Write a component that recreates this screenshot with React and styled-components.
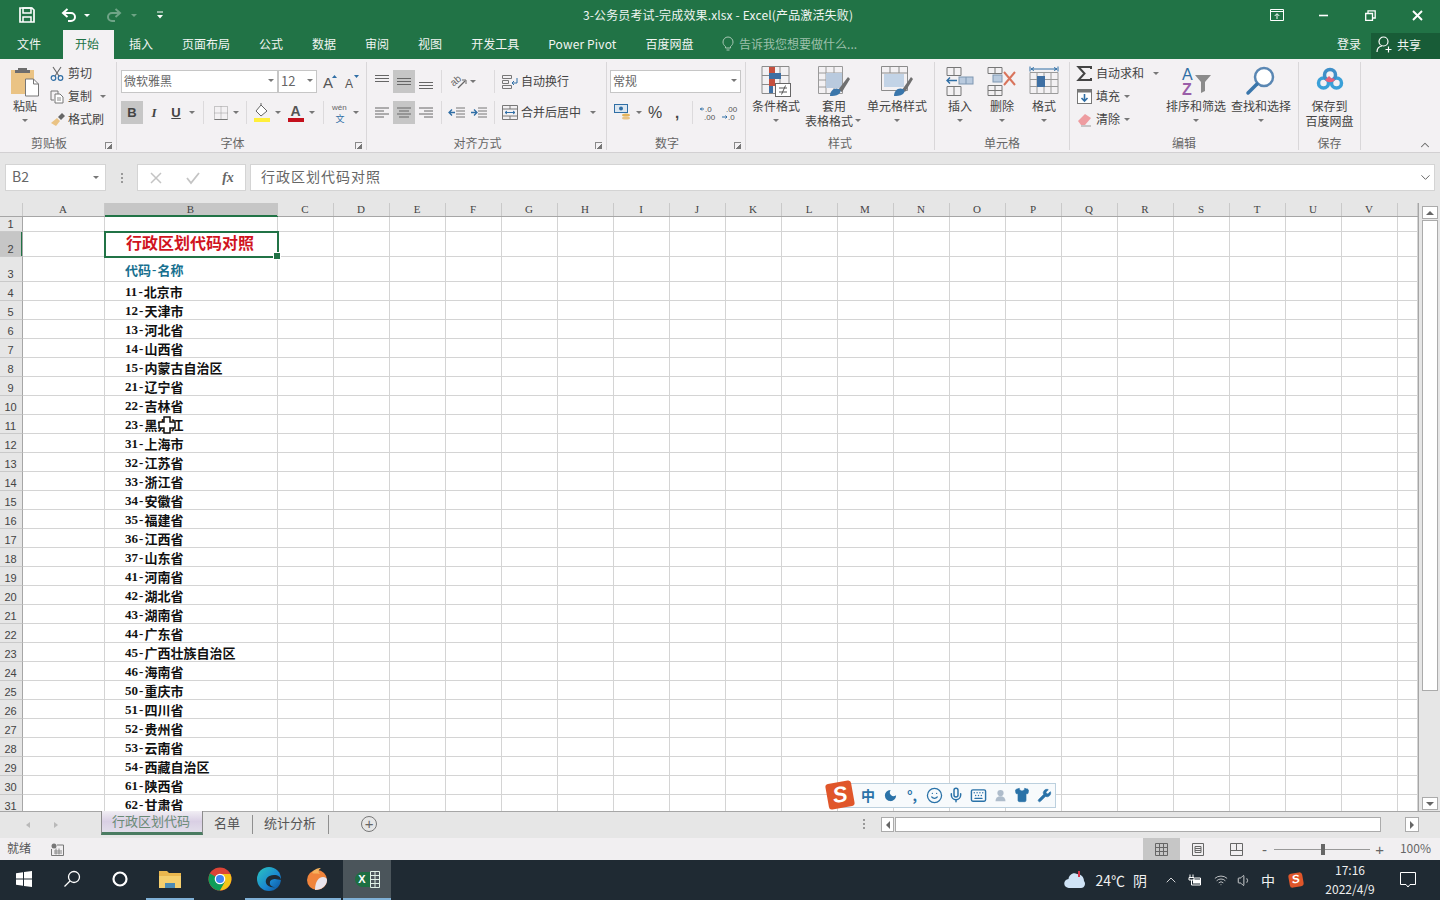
import React from "react";
import styled, { createGlobalStyle } from "styled-components";
import { Moon, Smile, Mic, Keyboard, Shirt, Wrench, UserRound, ChevronUp, ChevronDown, Volume1, Wifi } from "lucide-react";

const GlobalStyle = createGlobalStyle`
  html, body { margin: 0; padding: 0; background: #f1f0f1; }
  * { box-sizing: border-box; }
  body { font-family: "Noto Sans CJK SC", "Liberation Sans", sans-serif; font-size: 12px; color: #444; }
`;

const Page = styled.div`
  position: relative;
  width: 1440px;
  height: 900px;
  overflow: hidden;
  display: flex;
  flex-direction: column;
`;

/* ---- title bar ---- */
const TitleBar = styled.div`
  height: 30px;
  background: #217346;
  color: #fff;
  display: grid;
  grid-template-columns: 1fr auto 1fr;
  align-items: center;
`;
const Qat = styled.div`
  display: flex;
  align-items: center;
  padding-left: 19px;
`;
const QatBtn = styled.span`
  display: flex;
  align-items: center;
  justify-content: center;
  margin-left: ${p => p.$ml || 0}px;
  opacity: ${p => (p.$dim ? 0.35 : 1)};
`;
const QatCaret = styled.span`
  margin-left: ${p => p.$ml || 5}px;
  opacity: ${p => (p.$dim ? 0.35 : 1)};
  border-left: 3px solid transparent;
  border-right: 3px solid transparent;
  border-top: 3px solid #fff;
`;
const DocTitle = styled.div`
  font-size: 12px;
  letter-spacing: 0.15px;
  color: #f0f5f2;
  padding: 0 4px 2px 0;
`;
const WinBtns = styled.div`
  display: flex;
  justify-content: flex-end;
  align-items: center;
  margin-right: -1px;
`;
const WinBtn = styled.span`
  width: 47px;
  display: flex;
  justify-content: center;
  align-items: center;
`;

/* ---- ribbon tabs ---- */
const TabBar = styled.div`
  height: 29px;
  background: #217346;
  display: flex;
  align-items: stretch;
  gap: 2px;
  padding-left: 3.5px;
`;
const Tab = styled.div`
  padding: ${p => (p.$active ? "0 14.5px 2px 12px" : "0 13.5px 2px")};
  margin-left: ${p => (p.$active ? "6.5px" : "0")};
  background: ${p => (p.$active ? "#f3f1f3" : "transparent")};
  color: ${p => (p.$active ? "#217346" : "#f1f5f2")};
  display: flex;
  align-items: center;
  line-height: 1;
  white-space: nowrap;
  letter-spacing: ${p => (p.$latin ? "0.15px" : "0")};
`;
const TellMe = styled.div`
  display: flex;
  align-items: center;
  gap: 5px;
  margin-left: 13px;
  padding-bottom: 2px;
  color: #9dc0ab;
`;
const TabRight = styled.div`
  margin-left: auto;
  display: flex;
  align-items: stretch;
`;
const Login = styled.div`
  display: flex;
  align-items: center;
  color: #f1f5f2;
  padding: 0 10px 2px 0;
`;
const Share = styled.div`
  width: 69px;
  margin-top: 3px;
  background: #185c37;
  color: #f1f5f2;
  display: flex;
  align-items: center;
  gap: 5px;
  padding: 0 0 3px 5px;
`;

/* ---- ribbon ---- */
const Ribbon = styled.div`
  height: 94px;
  background: #f3f1f3;
  border-bottom: 1px solid #d2d0d2;
  display: flex;
  padding-top: 3px;
`;
const Group = styled.div`
  width: ${p => p.$w}px;
  flex: none;
  display: flex;
  flex-direction: column;
  border-right: 1px solid #d9d7d9;
  margin-bottom: 2px;
`;
const GroupBody = styled.div`
  height: 71px;
  display: flex;
  padding-left: ${p => p.$pl || 0}px;
  justify-content: ${p => (p.$center ? "center" : "flex-start")};
`;
const GroupLabel = styled.div`
  height: 18px;
  display: grid;
  grid-template-columns: 1fr auto 1fr;
  align-items: center;
  color: #666;
  padding-right: ${p => (p.$launch ? 18 : 0)}px;
  padding-top: 4px;
  line-height: 1;
  span:first-child { grid-column: 2; }
`;
const Launcher = styled.span`
  justify-self: end;
  width: 7px;
  height: 7px;
  border-left: 1px solid #888;
  border-top: 1px solid #888;
  margin-right: -14px;
  margin-top: 4px;
  background: linear-gradient(135deg, transparent 55%, #777 55%);
`;
const TwoRows = styled.div`
  display: flex;
  flex-direction: column;
  gap: 8px;
  padding-top: 8px;
`;
const ThreeRows = styled.div`
  display: flex;
  flex-direction: column;
  width: ${p => p.$w}px;
  flex: none;
  margin-left: ${p => p.$ml || 0}px;
`;
const ToolRow = styled.div`
  height: 23px;
  display: flex;
  align-items: center;
  white-space: nowrap;
`;
const IconBtn = styled.span`
  width: ${p => p.$w || 22}px;
  height: 23px;
  flex: none;
  margin-left: ${p => p.$ml || 0}px;
  display: flex;
  align-items: center;
  justify-content: center;
  background: ${p => (p.$on ? "#c6c6c6" : "transparent")};
  color: #444;
`;
const BoldLetter = styled.span`
  font-family: ${p => (p.$serif ? '"Liberation Serif", serif' : '"Liberation Sans", sans-serif')};
  font-weight: ${p => p.$weight || 700};
  font-style: ${p => (p.$italic ? "italic" : "normal")};
  text-decoration: ${p => (p.$under ? "underline" : "none")};
  font-size: ${p => p.$size || 13}px;
`;
const Caret = styled.span`
  width: ${p => p.$w || 10}px;
  flex: none;
  margin-left: ${p => p.$ml || 0}px;
  display: flex;
  justify-content: center;
  &::after {
    content: "";
    border-left: 3px solid transparent;
    border-right: 3px solid transparent;
    border-top: 3px solid #777;
  }
`;
const Sep = styled.span`
  width: 1px;
  height: 23px;
  flex: none;
  background: #dcdadc;
  margin-left: ${p => p.$ml || 0}px;
`;
const Select = styled.div`
  width: ${p => p.$w}px;
  height: 23px;
  flex: none;
  background: #fff;
  border: 1px solid #c6c6c6;
  margin-left: ${p => p.$ml || 0}px;
  display: flex;
  align-items: center;
  justify-content: space-between;
  padding: 0 1px 2px 2px;
  color: #666;
  font-size: ${p => p.$size || 12}px;
`;
const PasteBtn = styled.div`
  width: 50px;
  flex: none;
  display: flex;
  flex-direction: column;
  align-items: center;
  line-height: 1;
`;
const BigBtn = styled.div`
  width: ${p => p.$w || 60}px;
  flex: none;
  margin-left: ${p => p.$ml || 0}px;
  display: flex;
  flex-direction: column;
  align-items: center;
  white-space: nowrap;
`;
const BigIcon = styled.div`
  height: 37px;
  padding-top: 4px;
  display: flex;
  align-items: flex-start;
  justify-content: center;
`;
const BigLine = styled.div`
  height: 15px;
  line-height: 13px;
  padding-bottom: 2px;
  display: flex;
  align-items: center;
  justify-content: center;
`;
const Collapse = styled.div`
  flex: 1;
  display: flex;
  justify-content: flex-end;
  align-items: flex-end;
  padding: 0 8px 0 0;
  color: #666;
`;
const RowText = styled.span`
  margin-left: ${p => p.$ml ?? 4}px;
  padding-bottom: 2px;
`;

/* ---- formula bar ---- */
const FormulaBar = styled.div`
  height: 50px;
  background: #e6e6e6;
  display: flex;
  align-items: flex-start;
  padding: 11px 5px 0;
`;
const NameBox = styled.div`
  width: 101px;
  height: 27px;
  background: #fff;
  border: 1px solid #d4d4d4;
  display: flex;
  align-items: center;
  justify-content: space-between;
  padding: 0 4px 0 6px;
  font-size: 14px;
  color: #666;
  span:first-child { padding-bottom: 3px; }
`;
const Grip = styled.div`
  width: 31px;
  height: 27px;
  display: flex;
  flex-direction: column;
  align-items: center;
  justify-content: center;
  gap: 2px;
  flex: none;
  span { width: 2px; height: 2px; background: #999; }
`;
const FxBox = styled.div`
  width: 109px;
  height: 27px;
  background: #fff;
  border: 1px solid #d4d4d4;
  display: grid;
  grid-template-columns: 36px 38px 32px;
  align-items: center;
  justify-items: center;
  flex: none;
  color: #bbb;
`;
const FxText = styled.span`
  font-family: "Liberation Serif", serif;
  font-style: italic;
  font-weight: 700;
  font-size: 14px;
  color: #666;
`;
const FormulaInput = styled.div`
  flex: 1;
  height: 27px;
  margin-left: 4px;
  background: #fff;
  border: 1px solid #d4d4d4;
  display: flex;
  align-items: center;
  justify-content: space-between;
  padding: 0 1px 0 10px;
  font-size: 14px;
  letter-spacing: 1px;
  color: #666;
  span:first-child { padding-bottom: 3px; }
`;

/* ---- sheet ---- */
const Workspace = styled.div`
  height: 608px;
  display: flex;
  background: #e6e6e6;
`;
const Sheet = styled.div`
  position: relative;
  width: 1419px;
  overflow: hidden;
  border-right: 1px solid #a6a6a6;
`;
const COLS = "23px 82px 173px repeat(20, 56px) 20px";
const HeaderRow = styled.div`
  display: grid;
  grid-template-columns: ${COLS};
  height: 14px;
  background: #e6e6e6;
  border-bottom: 1px solid #a6a6a6;
`;
const ColHead = styled.div`
  font-family: "Liberation Serif", serif;
  font-size: 11px;
  line-height: 13px;
  text-align: center;
  padding-right: 1px;
  color: #444;
  border-right: 1px solid ${p => (p.$sel ? "#c6c6c6" : "#c9c9c9")};
  background: ${p => (p.$sel ? "#c6c6c6" : "transparent")};
  box-shadow: ${p => (p.$sel ? "0 1px 0 #217346, inset 0 -1px 0 #217346" : "none")};
  position: relative;
`;
const SheetRow = styled.div`
  display: grid;
  grid-template-columns: ${COLS};
  grid-template-rows: ${p => p.$h}px;
  height: ${p => p.$h}px;
  background: #fff;
`;
const RowHead = styled.div`
  font-family: "Liberation Sans", sans-serif;
  font-size: 11px;
  line-height: 1;
  display: flex;
  align-items: flex-end;
  justify-content: center;
  padding: 0 1px 1px 0;
  color: #444;
  background: ${p => (p.$sel ? "#c6c6c6" : "#e6e6e6")};
  border-right: 1px solid #a6a6a6;
  box-shadow: ${p => (p.$sel ? "inset -1px 0 0 #217346" : "none")};
  border-bottom: 1px solid #c9c9c9;
`;
const Cell = styled.div`
  border-right: 1px solid #d4d4d4;
  border-bottom: 1px solid #d4d4d4;
  display: flex;
  align-items: center;
  line-height: 1;
  white-space: nowrap;
`;
const SelectedCell = styled(Cell)`
  position: relative;
  z-index: 2;
  justify-content: center;
  outline: 2px solid #217346;
  outline-offset: -1px;
  padding: 0 2px 4px 0;
  font-size: 16px;
  font-weight: 700;
  color: #d0141e;
  &::after {
    content: "";
    position: absolute;
    right: -4px;
    bottom: -4px;
    width: 6px;
    height: 6px;
    background: #217346;
    border: 1px solid #fff;
  }
`;
const DataCell = styled(Cell)`
  padding: 0 0 0 20px;
  font-size: 13px;
  font-weight: 700;
  color: ${p => p.$color || "#111"};
`;
const Code = styled.span`
  font-family: "Liberation Serif", serif;
  font-size: 13px;
  font-weight: 700;
`;
const Dash = styled.span`
  display: inline-block;
  width: 6.5px;
  text-align: center;
  font-family: "Liberation Serif", serif;
  font-weight: 700;
`;
const CellCursor = styled.svg`
  position: absolute;
  left: 158px;
  top: 213px;
  z-index: 3;
`;

/* ---- vertical scrollbar ---- */
const VScroll = styled.div`
  flex: 1;
  display: flex;
  flex-direction: column;
  padding: 3px 2px 1px 3px;
`;
const ScrollArrow = styled.div`
  height: ${p => p.$h || 13}px;
  width: ${p => p.$w || "100%"};
  flex: none;
  background: #fff;
  border: 1px solid #ababab;
  display: flex;
  align-items: center;
  justify-content: center;
`;
const Tri = styled.span`
  ${p => p.$dir === "up" && "border-left:4px solid transparent;border-right:4px solid transparent;border-bottom:4px solid #666;"}
  ${p => p.$dir === "down" && "border-left:4px solid transparent;border-right:4px solid transparent;border-top:4px solid #666;"}
  ${p => p.$dir === "left" && "border-top:4px solid transparent;border-bottom:4px solid transparent;border-right:4px solid #666;"}
  ${p => p.$dir === "right" && "border-top:4px solid transparent;border-bottom:4px solid transparent;border-left:4px solid #666;"}
`;
const VThumb = styled.div`
  height: 471px;
  margin-top: 1px;
  background: #fff;
  border: 1px solid #ababab;
  flex: none;
`;
const Spacer = styled.div`
  flex: 1;
`;

/* ---- sheet tabs ---- */
const SheetTabs = styled.div`
  height: 27px;
  background: #e6e6e6;
  border-top: 1px solid #a6a6a6;
  display: flex;
  align-items: flex-start;
`;
const NavArrows = styled.div`
  width: 101px;
  height: 26px;
  flex: none;
  display: flex;
  align-items: center;
  padding-left: 26px;
  gap: 24px;
  opacity: 0.35;
`;
const NavTri = styled(Tri)`
  border-top-width: 3px;
  border-bottom-width: 3px;
`;
const ActiveSheet = styled.div`
  width: 102px;
  height: 24px;
  margin-top: -1px;
  padding-right: 2px;
  text-align: center;
  font-size: 13px;
  line-height: 19px;
  color: #6a8a76;
  border: 1px solid #8b8b8b;
  border-top: none;
  border-bottom: 3px solid #4a7c61;
  background: linear-gradient(#f1eef4, #d9cfe4 50%, #e2deea);
`;
const SheetTab = styled.div`
  padding: 0 12px 0 11px;
  height: 19px;
  margin-top: 3px;
  font-size: 13px;
  line-height: 15px;
  color: #555;
  border-right: ${p => (p.$sep ? "1px solid #8f8f8f" : "none")};
`;
const AddSheet = styled.div`
  width: 16px;
  height: 16px;
  margin: 4px 0 0 32px;
  border: 1px solid #777;
  border-radius: 50%;
  color: #666;
  font-size: 15px;
  line-height: 13px;
  text-align: center;
  font-family: "Liberation Sans", sans-serif;
`;
const TabsGrip = styled(Grip)`
  height: 24px;
  width: 20px;
  margin-left: auto;
`;
const HScroll = styled.div`
  width: 538px;
  height: 15px;
  margin: 5px 21px 0 7px;
  display: flex;
  flex: none;
`;
const HThumb = styled.div`
  width: 486px;
  margin-left: 1px;
  flex: none;
  background: #fff;
  border: 1px solid #ababab;
`;

/* ---- status bar ---- */
const StatusBar = styled.div`
  height: 22px;
  background: #f1eff1;
  display: flex;
  align-items: stretch;
  padding-left: 7px;
`;
const StatusText = styled.div`
  display: flex;
  align-items: center;
  width: 44px;
  padding-bottom: 4px;
  color: #555;
`;
const StatusIcon = styled.div`
  display: flex;
  align-items: center;
`;
const StatusRight = styled.div`
  margin-left: auto;
  display: flex;
  align-items: stretch;
`;
const ViewBtn = styled.div`
  width: 37px;
  margin-right: ${p => p.$mr || 0}px;
  background: ${p => (p.$on ? "#c6c6c6" : "transparent")};
  display: flex;
  align-items: center;
  justify-content: center;
`;
const Zoomer = styled.div`
  display: flex;
  align-items: center;
  width: 122px;
  margin: 0 16px 0 7px;
  font-family: "Liberation Sans", sans-serif;
  font-size: 15px;
  color: #666;
`;
const ZoomTrack = styled.div`
  position: relative;
  width: 101px;
  height: 1px;
  margin: 0 5px 0 7px;
  background: #999;
`;
const ZoomThumb = styled.span`
  position: absolute;
  left: 47px;
  top: -5px;
  width: 4px;
  height: 11px;
  background: #666;
`;
const ZoomPct = styled.div`
  display: flex;
  align-items: center;
  padding: 0 9px 4px 0;
  color: #666;
  font-size: 12px;
`;

/* ---- taskbar ---- */
const Taskbar = styled.div`
  height: 40px;
  background: #1f2a33;
  display: flex;
  align-items: stretch;
  color: #fff;
`;
const TaskItem = styled.div`
  width: 48px;
  flex: none;
  margin-left: ${p => p.$ml || 0}px;
  display: flex;
  align-items: center;
  justify-content: center;
  position: relative;
  background: ${p => (p.$active ? "#4b555b" : "transparent")};
  border-bottom: 2px solid ${p => (p.$open ? "#7fb0d6" : "transparent")};
  background-clip: padding-box;
`;
const XlsMark = styled.span`
  width: 15px;
  height: 15px;
  background: #1d6f42;
  color: #fff;
  border-radius: 50% 0 0 50%;
  font: 700 11px/15px "Liberation Sans", sans-serif;
  text-align: center;
`;
const Tray = styled.div`
  margin-left: auto;
  display: flex;
  align-items: center;
  color: #f1f1f1;
`;
const TrayText = styled.span`
  font-size: ${p => p.$size || 14}px;
  margin-left: ${p => p.$ml || 0}px;
`;
const TrayIcon = styled.span`
  display: flex;
  margin-left: ${p => p.$ml || 0}px;
`;
const Clock = styled.div`
  width: 78px;
  margin-left: 8px;
  padding-bottom: 2px;
  display: flex;
  flex-direction: column;
  align-items: center;
  font-size: 12px;
  line-height: 19px;
  color: #eee;
`;
const Notice = styled.div`
  width: 44px;
  margin-left: 7px;
  padding-right: 21px;
  display: flex;
  justify-content: center;
`;
const SogouS = styled.span`
  width: ${p => p.$size}px;
  height: ${p => p.$size}px;
  flex: none;
  display: flex;
  align-items: center;
  justify-content: center;
  background: #e0562a;
  color: #fff;
  border-radius: 3px;
  font: italic 700 ${p => p.$size * 0.85}px/1 "Liberation Sans", sans-serif;
  transform: rotate(-10deg);
`;

/* ---- floating input method bar ---- */
const ImeBar = styled.div`
  position: absolute;
  left: 827px;
  top: 782px;
  width: 229px;
  height: 26px;
  display: flex;
  align-items: center;
  gap: 4px;
  z-index: 5;
  color: #2a72a8;
`;
const ImeLogo = styled.div`
  margin-right: 2px;
  z-index: 1;
`;
const ImeBack = styled.div`
  position: absolute;
  left: 8px;
  right: 0;
  top: 1px;
  bottom: 0;
  background: #f7fafc;
  border: 1px solid #bcd0de;
`;
const ImeItem = styled.span`
  position: relative;
  width: 18px;
  display: flex;
  justify-content: center;
  font-weight: 700;
  font-size: 14px;
  line-height: 1;
  color: ${p => p.$color || "inherit"};
`;

/* ---- drawn icons ---- */
const S = ({ w = 16, h = 16, vb, children }) => (
  <svg width={w} height={h} viewBox={vb || `0 0 ${w} ${h}`} fill="none" overflow="visible">{children}</svg>
);

const SaveIcon = () => (
  <S w={16} h={16}>
    <path d="M1 1h12l2 2v12H1z" stroke="#fff" strokeWidth="1.7" />
    <path d="M4 1h8v5H4zM4 15v-5h8v5" stroke="#fff" strokeWidth="1.5" />
  </S>
);
const UndoIcon = () => (
  <S w={16} h={14}>
    <path d="M2 5h8a4 4 0 0 1 0 8H7" stroke="#fff" strokeWidth="2" />
    <path d="M6.5 1 2 5l4.5 4" stroke="#fff" strokeWidth="2" />
  </S>
);
const RedoIcon = () => (
  <S w={16} h={14}>
    <path d="M14 5H6a4 4 0 0 0 0 8h3" stroke="#fff" strokeWidth="2" />
    <path d="M9.5 1 14 5 9.5 9" stroke="#fff" strokeWidth="2" />
  </S>
);
const CustomIcon = () => (
  <S w={8} h={8}>
    <path d="M1 1h6" stroke="#fff" />
    <path d="M1 4h6L4 7.5z" fill="#fff" />
  </S>
);
const DisplayIcon = () => (
  <S w={14} h={12}>
    <path d="M.5.5h13v11H.5zM.5 2.5h13" stroke="#fff" />
    <path d="M7 10V5M4.7 7 7 4.6 9.3 7" stroke="#fff" />
  </S>
);
const MinIcon = () => <S w={11} h={3}><path d="M1 1.5h9" stroke="#fff" strokeWidth="1.6" /></S>;
const RestoreIcon = () => (
  <S w={11} h={11}>
    <path d="M.7 3.5h6.8v6.8H.7zM3 3V.8h7.2V8H8" stroke="#fff" strokeWidth="1.3" />
  </S>
);
const CloseIcon = () => <S w={11} h={11}><path d="m1 1 9 9M10 1l-9 9" stroke="#fff" strokeWidth="1.9" /></S>;
const BulbIcon = () => (
  <S w={12} h={16}>
    <path d="M3.5 10.5C2 9.4 1 8 1 6a5 5 0 0 1 10 0c0 2-1 3.4-2.5 4.5V12h-5z" stroke="#a9c8b5" />
    <path d="M4.5 14h3" stroke="#a9c8b5" />
  </S>
);
const ShareIcon = () => (
  <S w={16} h={17}>
    <circle cx="7.5" cy="5.5" r="4.500" stroke="#fff" strokeWidth="1.200" />
    <path d="M1 16c0-3 2-5.500 5-6M12.500 10.500v6M9.500 13.500h6" stroke="#fff" strokeWidth="1.200" />
  </S>
);
const PasteIcon = () => (
  <S w={30} h={31}>
    <rect x="1" y="4" width="23" height="24" fill="#eac384" />
    <path d="M8 4V2h9v2h3v3H5V4z" fill="#6d6d6d" />
    <path d="M15.5 13h8l5 5v12h-13z" fill="#fff" stroke="#777" />
    <path d="M23.5 13v5h5" stroke="#777" />
  </S>
);
const ScissorsIcon = () => (
  <S w={14} h={15}>
    <path d="M3 1l6 9M11 1l-6 9" stroke="#666" strokeWidth="1.1" />
    <circle cx="3.5" cy="12" r="2.3" stroke="#2f6ea5" strokeWidth="1.2" />
    <circle cx="10.5" cy="12" r="2.3" stroke="#2f6ea5" strokeWidth="1.2" />
  </S>
);
const CopyIcon = () => (
  <S w={14} h={14}>
    <path d="M1 1h7v3M1 1v9h3" stroke="#777" />
    <path d="M5 4h5l3 3v6H5z" fill="#fff" stroke="#777" />
    <path d="M7 8h4M7 10h4" stroke="#888" />
  </S>
);
const BrushIcon = () => (
  <S w={16} h={15}>
    <path d="M1 11 7 6l3 3-4 5z" fill="#eac384" />
    <path d="M8 5l4-4 3 3-4 4z" fill="#666" />
  </S>
);
const FontUp = ({ small }) => (
  <S w={16} h={15}>
    <text x="1" y="14" fontFamily="Liberation Sans" fontSize={small ? 12 : 15} fill="#555">A</text>
    {small
      ? <path d="M10 1h5l-2.500 3z" fill="#2f6ea5" />
      : <path d="M10 4h5l-2.500-3z" fill="#2f6ea5" />}
  </S>
);
const BorderIcon = () => (
  <S w={14} h={14}>
    <path d="M.5.5h13v13H.5zM7 .5v13M.5 7h13" stroke="#999" strokeDasharray="1 1" />
    <path d="M.5 13.5h13" stroke="#777" />
  </S>
);
const FillIcon = () => (
  <S w={18} h={20}>
    <path d="M8 2 3 8l5 5 6-5z" fill="#fff" stroke="#666" />
    <path d="M8 2V0" stroke="#666" />
    <rect x="1" y="15" width="16" height="4" fill="#ffef3a" />
  </S>
);
const ColorIcon = () => (
  <S w={16} h={18}>
    <text x="2.5" y="12" fontFamily="Liberation Sans" fontSize="14" fontWeight="700" fill="#555">A</text>
    <rect x="0" y="14" width="16" height="4" fill="#c4101c" />
  </S>
);
const WenIcon = () => (
  <S w={16} h={18}>
    <text x="0" y="6" fontFamily="Liberation Sans" fontSize="8" fill="#666">wén</text>
    <text x="3.500" y="18" fontFamily="Noto Sans CJK SC" fontSize="9" fill="#2f6ea5">文</text>
  </S>
);
const AlignV = ({ pos }) => {
  const y = { top: 2, mid: 5, bot: 9 }[pos];
  return (
    <S w={14} h={18}>
      <path d={`M0 ${y + 0.5}h14M0 ${y + 3.5}h14M0 ${y + 6.5}h14`} stroke="#666" />
    </S>
  );
};
const AlignH = ({ pos }) => {
  const d = {
    left: "M0 3h14M0 6h9M0 9h14M0 12h9",
    mid: "M0 3h14M2 6h10M0 9h14M2 12h10",
    right: "M0 3h14M5 6h9M0 9h14M5 12h9",
  }[pos];
  return <S w={14} h={15}><path d={d} stroke="#666" /></S>;
};
const OrientIcon = () => (
  <S w={16} h={16}>
    <text x="0" y="10" fontFamily="Liberation Sans" fontSize="10" fill="#666" transform="rotate(-40 5 8)">ab</text>
    <path d="M7 14 14 7" stroke="#666" strokeWidth="1.2" />
    <path d="m11 6 4 0 0 4" stroke="#666" />
  </S>
);
const IndentIcon = ({ out }) => (
  <S w={16} h={14}>
    <path d="M7 2h9M7 5h9M7 8h9M7 11h9" stroke="#777" />
    <path d={out ? "M0 6.500h6M3 3.500l-3 3 3 3" : "M0 6.500h6M3 3.500l3 3-3 3"} stroke="#2f6ea5" strokeWidth="1.300" />
  </S>
);
const WrapIcon = () => (
  <S w={16} h={14}>
    <path d="M.5.5h9v3h-9zM.5 5.5h6v3h-6zM.5 10.5h9v3h-9z" stroke="#777" />
    <path d="M15 3v5h-5M12 6l-2 2 2 2" stroke="#2f6ea5" />
  </S>
);
const MergeIcon = () => (
  <S w={16} h={15}>
    <path d="M.5.5h15v14H.5zM.5 4h15M.5 11h15M8 .5V4M8 11v3.5" stroke="#777" />
    <path d="M3 7.5h10M5 6 3 7.5 5 9M11 6l2 1.5L11 9" stroke="#2f6ea5" />
  </S>
);
const CurrencyIcon = () => (
  <S w={18} h={17}>
    <rect x=".5" y=".5" width="13" height="8" fill="#dbe6f0" stroke="#2f6ea5" />
    <circle cx="7" cy="4.5" r="2" fill="#2f6ea5" />
    <ellipse cx="12" cy="11" rx="4" ry="1.6" fill="#e3b35c" />
    <ellipse cx="12" cy="14" rx="4" ry="1.6" fill="#eac384" />
  </S>
);
const DecIcon = ({ more }) => (
  <S w={16} h={16}>
    <text x={more ? 5 : 4} y="7" fontFamily="Liberation Sans" fontSize="8" fill="#555">{more ? ".0" : ".00"}</text>
    <text x={more ? 4 : 6} y="15" fontFamily="Liberation Sans" fontSize="8" fill="#555">{more ? ".00" : ".0"}</text>
    <path d={more ? "M0 4h4M2 2.5.5 4 2 5.5" : "M0 12h5M3.5 10.5 5 12l-1.500 1.500"} stroke="#2f6ea5" />
  </S>
);
const CondIcon = () => (
  <S w={30} h={31}>
    <path d="M1 .5h27v27H1zM1 9.500h27M1 18.500h27M10 .5v27M19 .5v27" stroke="#8b8b8b" />
    <rect x="8" y="1" width="6" height="7" fill="#c5503f" />
    <rect x="8" y="7" width="12" height="6" fill="#3e6fa3" />
    <rect x="8" y="13" width="6" height="7" fill="#c5503f" />
    <rect x="8" y="20" width="4" height="7" fill="#3e6fa3" />
    <rect x="14.500" y="17.500" width="15" height="13" fill="#fff" stroke="#666" />
    <path d="M18 22h8M18 26h8M24.500 19.500l-4 9" stroke="#555" />
  </S>
);
const TableIcon = () => (
  <S w={32} h={31}>
    <path d="M.5.5h24v27H.5zM.5 7h24M.5 14h24M.5 21h24M8 .5v27M16 .5v27" stroke="#9a9a9a" />
    <rect x="8" y="7" width="16" height="15" fill="#b9cade" />
    <path d="M20 24 30 11l2 2-8 13z" fill="#6f6f6f" />
    <path d="M12 30c0-5 4-9 9-7 2 1 2 3 0 5-3 2-6 2-9 2z" fill="#3a76ab" />
  </S>
);
const CellStyleIcon = () => (
  <S w={32} h={31}>
    <path d="M.5.5h26v24H.5zM.5 7h26M9 .5V7M18 .5V7" stroke="#8b8b8b" />
    <rect x="3" y="8" width="20" height="13" fill="#c2d3e6" />
    <path d="M21 24 30 11l2 2-8 13z" fill="#6f6f6f" />
    <path d="M13 30c0-5 4-9 9-7 2 1 2 3 0 5-3 2-6 2-9 2z" fill="#3a76ab" />
  </S>
);
const InsertIcon = () => (
  <S w={28} h={31}>
    <path d="M1 1.500h14v8H1zM8 1.500v8M1 20.500h14v9H1zM8 20.500v9" stroke="#777" />
    <rect x="13" y="11" width="14" height="7" fill="#b9cade" stroke="#7f97b2" />
    <path d="M20 11v7" stroke="#7f97b2" />
    <path d="M1 14.500h10M4 11.500l-3 3 3 3" stroke="#2f6ea5" strokeWidth="1.400" />
  </S>
);
const DeleteIcon = () => (
  <S w={30} h={31}>
    <path d="M1 1.500h14v6H1zM8 1.500v6M1 19.500h14v10H1zM8 19.500v10M1 24.500h14" stroke="#777" />
    <rect x="6" y="9" width="9" height="7" fill="#b9cade" stroke="#7f97b2" />
    <path d="m17 6 11 13M28 6 17 19" stroke="#d9745c" strokeWidth="2" />
  </S>
);
const FormatIcon = () => (
  <S w={30} h={31}>
    <path d="M1 .5v5M29 .5v5M2 3h26M5 1.500 2 3l3 1.500M25 1.500 28 3l-3 1.500" stroke="#2f6ea5" />
    <path d="M1 6.500h28v21H1zM8 6.500v21M15 6.500v21M22 6.500v21M1 13.500h28M1 20.500h28" stroke="#9a9a9a" />
    <rect x="8" y="10" width="8" height="11" fill="#3e6fa3" />
  </S>
);
const SumIcon = () => (
  <S w={15} h={15}>
    <path d="M14 3V1H1.500l6 6.500L1.500 14H14v-2" stroke="#444" strokeWidth="2" />
  </S>
);
const FillDownIcon = () => (
  <S w={15} h={15}>
    <rect x=".5" y=".5" width="14" height="14" fill="#fff" stroke="#777" />
    <rect x=".5" y=".5" width="14" height="3" fill="#777" />
    <path d="M7.500 5v7M4.500 9l3 3 3-3" stroke="#2f6ea5" strokeWidth="1.600" />
  </S>
);
const EraserIcon = () => (
  <S w={15} h={14}>
    <path d="M1 8 8 1l6 4-6 7H4z" fill="#ee9ca0" />
    <path d="M4 13h10" stroke="#999" />
  </S>
);
const SortIcon = () => (
  <S w={30} h={30}>
    <text x="1" y="14" fontFamily="Liberation Sans" fontSize="16" fill="#2f6ea5">A</text>
    <text x="1" y="29" fontFamily="Liberation Sans" fontSize="16" fontWeight="700" fill="#9a5ea8">Z</text>
    <path d="M14 9h16l-6 7v9l-4 2V16z" fill="#8b8b8b" />
  </S>
);
const FindIcon = () => (
  <S w={30} h={30}>
    <circle cx="18" cy="11" r="9" fill="#fff" stroke="#5a87b3" strokeWidth="2.500" />
    <path d="m11 18-9 9" stroke="#3a76ab" strokeWidth="3.500" strokeLinecap="round" />
  </S>
);
const BaiduIcon = () => (
  <S w={28} h={26}>
    <circle cx="7.500" cy="17" r="5" stroke="#3aa0d8" strokeWidth="3.500" />
    <circle cx="20.500" cy="17" r="5" stroke="#3aa0d8" strokeWidth="3.500" />
    <circle cx="14" cy="9" r="5.500" stroke="#3f8fc8" strokeWidth="3.500" />
    <path d="M10 13a5.500 5.500 0 0 0 8 0M12 11l4 4" stroke="#e8607a" strokeWidth="3" />
  </S>
);
const WinLogo = () => (
  <S w={16} h={16}>
    <path d="M0 2.300 7 1.300V7.500H0zM8 1.100 16 0v7.500H8zM0 8.500h7v6.200L0 13.700zM8 8.500h8V16l-8-1.100z" fill="#fff" />
  </S>
);
const SearchIcon = () => (
  <S w={18} h={18}>
    <circle cx="11" cy="7" r="5.500" stroke="#fff" strokeWidth="1.300" />
    <path d="M7 11 1.500 16.500" stroke="#fff" strokeWidth="1.300" />
  </S>
);
const CortanaIcon = () => (
  <S w={16} h={16}><circle cx="8" cy="8" r="6.500" stroke="#fff" strokeWidth="2.200" /></S>
);
const FolderIcon = () => (
  <S w={22} h={19}>
    <path d="M0 1h8l2 2h12v15H0z" fill="#eab74e" />
    <path d="M0 6h22v12H0z" fill="#f5cf6e" />
    <rect x="6" y="13" width="10" height="5" fill="#4b8bb5" />
  </S>
);
const ChromeIcon = () => (
  <S w={24} h={24}>
    <circle cx="12" cy="12" r="11.500" fill="#dc4437" />
    <path d="M12 12 1.900 6.500A11.500 11.500 0 0 0 12 23.500l5-8z" fill="#0f9d58" />
    <path d="M12 7h10.300A11.500 11.500 0 0 1 12 23.500l5-9z" fill="#f5c518" />
    <circle cx="12" cy="12" r="5.300" fill="#fff" />
    <circle cx="12" cy="12" r="4" fill="#4285f4" />
  </S>
);
const EdgeIcon = () => (
  <S w={24} h={24}>
    <defs>
      <linearGradient id="edgeG" x1="0" y1="0" x2="1" y2="1">
        <stop offset="0" stopColor="#2bc6c0" />
        <stop offset=".6" stopColor="#1a86d0" />
        <stop offset="1" stopColor="#0c4f9a" />
      </linearGradient>
    </defs>
    <circle cx="12" cy="12" r="12" fill="url(#edgeG)" />
    <path d="M24 13c0-3-3-5-7-5-6 0-9 4-8 8 1 3 5 5 9 4-3 0-6-2-5-5 0-2 3-3 5-3s4 1 6 1z" fill="#1f2a33" />
  </S>
);
const FoxIcon = () => (
  <S w={22} h={24}>
    <circle cx="11" cy="13" r="10" fill="#f0843c" />
    <path d="M9 23c6 0 12-4 12-10 0-2-2-3-4-3-4 0-8 4-8 13z" fill="#e9e4ec" />
    <path d="M6 6c2-4 6-5 9-5-3 2-3 4-1 6-4-1-6 0-8-1z" fill="#f6b15c" />
  </S>
);
const XlsLines = () => (
  <S w={10} h={17}>
    <path d="M.5.5h9v16h-9zM.5 4.500h9M.5 8.500h9M.5 12.500h9M5 .5v16" stroke="#dff0e6" />
  </S>
);
const CloudIcon = () => (
  <S w={22} h={18}>
    <path d="M5 17a4.500 4.500 0 0 1-.5-9C5 4 9 1 13 3c4 0 7 3 7 7 2 2 1 7-3 7z" fill="#cfe3f6" />
    <path d="M15 0v6" stroke="#d8344a" strokeWidth="2" />
  </S>
);
const BatteryIcon = () => (
  <S w={15} h={12}>
    <path d="M3 .5v3M6 .5v3M2 3.500h5V6H2z" stroke="#fff" />
    <path d="M4.500 6v5h9V4h-6" stroke="#fff" />
    <rect x="6" y="5.500" width="7" height="4" fill="#fff" />
  </S>
);
const NoticeIcon = () => (
  <S w={16} h={16}>
    <path d="M.5.5h15v12H10l-2 2.500-2-2.500H.5z" stroke="#fff" />
  </S>
);
const StatGrid = () => (
  <S w={13} h={13}>
    <circle cx="3" cy="3" r="2.500" fill="#777" />
    <path d="M6 2h6.500v10.500H.5V6" stroke="#777" />
    <path d="M3 8h8M3 10h8M5 5.500v6M8 5.500v6" stroke="#888" />
  </S>
);
const NormalView = () => (
  <S w={13} h={13}><path d="M.5.5h12v12H.5zM4.500.5v12M8.500.5v12M.5 4.500h12M.5 8.500h12" stroke="#666" /></S>
);
const LayoutView = () => (
  <S w={12} h={13}><path d="M.5.5h11v12H.5zM3 3.500h6v6H3zM3 5.500h6M3 7.500h6" stroke="#666" /></S>
);
const BreakView = () => (
  <S w={13} h={13}><path d="M.5.5h12v12H.5zM6.500.5v7M.5 7.500h12" stroke="#666" /></S>
);
const Tick = () => (
  <S w={14} h={12}><path d="M1 6l4 5 8-10" stroke="#c4c4c4" strokeWidth="1.800" /></S>
);
const Cross = () => (
  <S w={12} h={12}><path d="m1 1 10 10M11 1 1 11" stroke="#c4c4c4" strokeWidth="1.500" /></S>
);

/* ---- data ---- */
const tabs = ["文件", "开始", "插入", "页面布局", "公式", "数据", "审阅", "视图", "开发工具", "Power Pivot", "百度网盘"];
const letters = "ABCDEFGHIJKLMNOPQRSTUV".split("");
const regions = [
  ["11", "北京市"], ["12", "天津市"], ["13", "河北省"], ["14", "山西省"], ["15", "内蒙古自治区"],
  ["21", "辽宁省"], ["22", "吉林省"], ["23", "黑龙江"], ["31", "上海市"], ["32", "江苏省"],
  ["33", "浙江省"], ["34", "安徽省"], ["35", "福建省"], ["36", "江西省"], ["37", "山东省"],
  ["41", "河南省"], ["42", "湖北省"], ["43", "湖南省"], ["44", "广东省"], ["45", "广西壮族自治区"],
  ["46", "海南省"], ["50", "重庆市"], ["51", "四川省"], ["52", "贵州省"], ["53", "云南省"],
  ["54", "西藏自治区"], ["61", "陕西省"], ["62", "甘肃省"],
];
const emptyCells = Array.from({ length: 21 });

const Blank = () => emptyCells.map((_, i) => <Cell key={i} />);

const Title = () => (
  <TitleBar>
    <Qat>
      <QatBtn><SaveIcon /></QatBtn>
      <QatBtn $ml={26}><UndoIcon /></QatBtn>
      <QatCaret $ml={7} />
      <QatBtn $ml={16} $dim><RedoIcon /></QatBtn>
      <QatCaret $ml={9} $dim />
      <QatBtn $ml={19}><CustomIcon /></QatBtn>
    </Qat>
    <DocTitle>3-公务员考试-完成效果.xlsx - Excel(产品激活失败)</DocTitle>
    <WinBtns>
      <WinBtn><DisplayIcon /></WinBtn>
      <WinBtn><MinIcon /></WinBtn>
      <WinBtn><RestoreIcon /></WinBtn>
      <WinBtn><CloseIcon /></WinBtn>
    </WinBtns>
  </TitleBar>
);

const Tabs = () => (
  <TabBar>
    {tabs.map(t => <Tab key={t} $active={t === "开始"} $latin={t === "Power Pivot"}>{t}</Tab>)}
    <TellMe><BulbIcon />告诉我您想要做什么...</TellMe>
    <TabRight>
      <Login>登录</Login>
      <Share><ShareIcon />共享</Share>
    </TabRight>
  </TabBar>
);

const RibbonPanel = () => (
  <Ribbon>
    <Group $w={117}>
      <GroupBody>
        <PasteBtn>
          <BigIcon><PasteIcon /></BigIcon>
          <BigLine>粘贴</BigLine>
          <BigLine><Caret /></BigLine>
        </PasteBtn>
        <ThreeRows $w={60}>
          <ToolRow><ScissorsIcon /><RowText>剪切</RowText></ToolRow>
          <ToolRow><CopyIcon /><RowText>复制</RowText><Caret $ml={6} /></ToolRow>
          <ToolRow><BrushIcon /><RowText $ml={2}>格式刷</RowText></ToolRow>
        </ThreeRows>
      </GroupBody>
      <GroupLabel $launch><span>剪贴板</span><Launcher /></GroupLabel>
    </Group>

    <Group $w={250}>
      <GroupBody $pl={4}>
        <TwoRows>
          <ToolRow>
            <Select $w={157}>微软雅黑<Caret /></Select>
            <Select $w={39} $size={13}>12<Caret /></Select>
            <IconBtn $ml={2}><FontUp /></IconBtn>
            <IconBtn><FontUp small /></IconBtn>
          </ToolRow>
          <ToolRow>
            <IconBtn $on><BoldLetter>B</BoldLetter></IconBtn>
            <IconBtn><BoldLetter $serif $italic>I</BoldLetter></IconBtn>
            <IconBtn><BoldLetter $under>U</BoldLetter></IconBtn>
            <Caret />
            <Sep $ml={6} />
            <IconBtn $w={20} $ml={7}><BorderIcon /></IconBtn>
            <Caret />
            <Sep $ml={5} />
            <IconBtn $ml={4}><FillIcon /></IconBtn>
            <Caret />
            <IconBtn $ml={2}><ColorIcon /></IconBtn>
            <Caret />
            <Sep $ml={6} />
            <IconBtn $ml={5}><WenIcon /></IconBtn>
            <Caret />
          </ToolRow>
        </TwoRows>
      </GroupBody>
      <GroupLabel $launch><span>字体</span><Launcher /></GroupLabel>
    </Group>

    <Group $w={240}>
      <GroupBody $pl={4}>
        <TwoRows>
          <ToolRow>
            <IconBtn><AlignV pos="top" /></IconBtn>
            <IconBtn $on><AlignV pos="mid" /></IconBtn>
            <IconBtn><AlignV pos="bot" /></IconBtn>
            <Sep $ml={4} />
            <IconBtn $ml={6}><OrientIcon /></IconBtn>
            <Caret $w={6} />
            <Sep $ml={18} />
            <IconBtn $ml={4}><WrapIcon /></IconBtn>
            <RowText $ml={0}>自动换行</RowText>
          </ToolRow>
          <ToolRow>
            <IconBtn><AlignH pos="left" /></IconBtn>
            <IconBtn $on><AlignH pos="mid" /></IconBtn>
            <IconBtn><AlignH pos="right" /></IconBtn>
            <Sep $ml={4} />
            <IconBtn $ml={4}><IndentIcon out /></IconBtn>
            <IconBtn><IndentIcon /></IconBtn>
            <Sep $ml={4} />
            <IconBtn $ml={4}><MergeIcon /></IconBtn>
            <RowText $ml={0}>合并后居中</RowText>
            <Caret $ml={7} />
          </ToolRow>
        </TwoRows>
      </GroupBody>
      <GroupLabel $launch><span>对齐方式</span><Launcher /></GroupLabel>
    </Group>

    <Group $w={139}>
      <GroupBody $pl={3}>
        <TwoRows>
          <ToolRow><Select $w={131}>常规<Caret /></Select></ToolRow>
          <ToolRow>
            <IconBtn $ml={2}><CurrencyIcon /></IconBtn>
            <Caret />
            <IconBtn><BoldLetter $size={16} $weight={400}>%</BoldLetter></IconBtn>
            <IconBtn><BoldLetter $size={15}>,</BoldLetter></IconBtn>
            <Sep $ml={4} />
            <IconBtn $ml={4}><DecIcon more /></IconBtn>
            <IconBtn><DecIcon /></IconBtn>
          </ToolRow>
        </TwoRows>
      </GroupBody>
      <GroupLabel $launch><span>数字</span><Launcher /></GroupLabel>
    </Group>

    <Group $w={189}>
      <GroupBody>
        <BigBtn>
          <BigIcon><CondIcon /></BigIcon>
          <BigLine>条件格式</BigLine>
          <BigLine><Caret /></BigLine>
        </BigBtn>
        <BigBtn $w={56}>
          <BigIcon><TableIcon /></BigIcon>
          <BigLine>套用</BigLine>
          <BigLine>表格格式<Caret /></BigLine>
        </BigBtn>
        <BigBtn $ml={5}>
          <BigIcon><CellStyleIcon /></BigIcon>
          <BigLine>单元格样式</BigLine>
          <BigLine><Caret /></BigLine>
        </BigBtn>
      </GroupBody>
      <GroupLabel><span>样式</span></GroupLabel>
    </Group>

    <Group $w={135}>
      <GroupBody $pl={4}>
        <BigBtn $w={42}>
          <BigIcon><InsertIcon /></BigIcon>
          <BigLine>插入</BigLine>
          <BigLine><Caret /></BigLine>
        </BigBtn>
        <BigBtn $w={42}>
          <BigIcon><DeleteIcon /></BigIcon>
          <BigLine>删除</BigLine>
          <BigLine><Caret /></BigLine>
        </BigBtn>
        <BigBtn $w={42}>
          <BigIcon><FormatIcon /></BigIcon>
          <BigLine>格式</BigLine>
          <BigLine><Caret /></BigLine>
        </BigBtn>
      </GroupBody>
      <GroupLabel><span>单元格</span></GroupLabel>
    </Group>

    <Group $w={229}>
      <GroupBody>
        <ThreeRows $w={89} $ml={7}>
          <ToolRow><SumIcon /><RowText>自动求和</RowText><Caret $ml={7} /></ToolRow>
          <ToolRow><FillDownIcon /><RowText>填充</RowText><Caret $w={14} /></ToolRow>
          <ToolRow><EraserIcon /><RowText>清除</RowText><Caret $w={14} /></ToolRow>
        </ThreeRows>
        <BigBtn>
          <BigIcon><SortIcon /></BigIcon>
          <BigLine>排序和筛选</BigLine>
          <BigLine><Caret /></BigLine>
        </BigBtn>
        <BigBtn $ml={5}>
          <BigIcon><FindIcon /></BigIcon>
          <BigLine>查找和选择</BigLine>
          <BigLine><Caret /></BigLine>
        </BigBtn>
      </GroupBody>
      <GroupLabel><span>编辑</span></GroupLabel>
    </Group>

    <Group $w={62}>
      <GroupBody $center>
        <BigBtn>
          <BigIcon><BaiduIcon /></BigIcon>
          <BigLine>保存到</BigLine>
          <BigLine>百度网盘</BigLine>
        </BigBtn>
      </GroupBody>
      <GroupLabel><span>保存</span></GroupLabel>
    </Group>

    <Collapse><ChevronUp size={14} strokeWidth={1.8} /></Collapse>
  </Ribbon>
);

const Formula = () => (
  <FormulaBar>
    <NameBox><span>B2</span><Caret /></NameBox>
    <Grip><span /><span /><span /></Grip>
    <FxBox><Cross /><Tick /><FxText>fx</FxText></FxBox>
    <FormulaInput><span>行政区划代码对照</span><ChevronDown size={15} strokeWidth={1.6} /></FormulaInput>
  </FormulaBar>
);

const Grid = () => (
  <Workspace>
    <Sheet>
      <HeaderRow>
        <ColHead />
        {letters.map(l => <ColHead key={l} $sel={l === "B"}>{l}</ColHead>)}
        <ColHead />
      </HeaderRow>
      <SheetRow $h={15}>
        <RowHead>1</RowHead>
        <Cell />
        <Cell />
        <Blank />
      </SheetRow>
      <SheetRow $h={25}>
        <RowHead $sel>2</RowHead>
        <Cell />
        <SelectedCell>行政区划代码对照</SelectedCell>
        <Blank />
      </SheetRow>
      <SheetRow $h={25}>
        <RowHead>3</RowHead>
        <Cell />
        <DataCell $color="#17708f">代码<Dash>-</Dash>名称</DataCell>
        <Blank />
      </SheetRow>
      {regions.map(([code, name], i) => (
        <SheetRow key={code} $h={19}>
          <RowHead>{i + 4}</RowHead>
          <Cell />
          <DataCell><Code>{code}</Code><Dash>-</Dash>{name}</DataCell>
          <Blank />
        </SheetRow>
      ))}
      <CellCursor width="18" height="18" viewBox="0 0 18 18">
        <path d="M6 1h6v5h5v6h-5v5H6v-5H1V6h5z" fill="#fff" stroke="#111" strokeWidth="1.500" />
      </CellCursor>
    </Sheet>
    <VScroll>
      <ScrollArrow><Tri $dir="up" /></ScrollArrow>
      <VThumb />
      <Spacer />
      <ScrollArrow><Tri $dir="down" /></ScrollArrow>
    </VScroll>
  </Workspace>
);

const SheetBar = () => (
  <SheetTabs>
    <NavArrows><NavTri $dir="left" /><NavTri $dir="right" /></NavArrows>
    <ActiveSheet>行政区划代码</ActiveSheet>
    <SheetTab $sep>名单</SheetTab>
    <SheetTab $sep>统计分析</SheetTab>
    <AddSheet>+</AddSheet>
    <TabsGrip><span /><span /><span /></TabsGrip>
    <HScroll>
      <ScrollArrow $w="13px" $h={15}><Tri $dir="left" /></ScrollArrow>
      <HThumb />
      <Spacer />
      <ScrollArrow $w="14px" $h={15}><Tri $dir="right" /></ScrollArrow>
    </HScroll>
  </SheetTabs>
);

const Status = () => (
  <StatusBar>
    <StatusText>就绪</StatusText>
    <StatusIcon><StatGrid /></StatusIcon>
    <StatusRight>
      <ViewBtn $on><NormalView /></ViewBtn>
      <ViewBtn $mr={1}><LayoutView /></ViewBtn>
      <ViewBtn><BreakView /></ViewBtn>
      <Zoomer>
        -
        <ZoomTrack><ZoomThumb /></ZoomTrack>
        +
      </Zoomer>
      <ZoomPct>100%</ZoomPct>
    </StatusRight>
  </StatusBar>
);

const Tasks = () => (
  <Taskbar>
    <TaskItem><WinLogo /></TaskItem>
    <TaskItem><SearchIcon /></TaskItem>
    <TaskItem><CortanaIcon /></TaskItem>
    <TaskItem $ml={2} $open><FolderIcon /></TaskItem>
    <TaskItem $ml={2}><ChromeIcon /></TaskItem>
    <TaskItem $ml={1} $open><EdgeIcon /></TaskItem>
    <TaskItem $open><FoxIcon /></TaskItem>
    <TaskItem $ml={2} $active $open><XlsMark>X</XlsMark><XlsLines /></TaskItem>
    <Tray>
      <CloudIcon />
      <TrayText $ml={9}>24℃</TrayText>
      <TrayText $ml={8}>阴</TrayText>
      <TrayIcon $ml={16}><ChevronUp size={16} strokeWidth={1.3} /></TrayIcon>
      <TrayIcon $ml={8}><BatteryIcon /></TrayIcon>
      <TrayIcon $ml={12}><Wifi size={14} strokeWidth={1.3} /></TrayIcon>
      <TrayIcon $ml={9}><Volume1 size={15} strokeWidth={1.3} /></TrayIcon>
      <TrayText $ml={9}>中</TrayText>
      <TrayIcon $ml={14}><SogouS $size={14}>S</SogouS></TrayIcon>
      <Clock><span>17:16</span><span>2022/4/9</span></Clock>
      <Notice><NoticeIcon /></Notice>
    </Tray>
  </Taskbar>
);

const Ime = () => (
  <ImeBar>
    <ImeBack />
    <ImeLogo><SogouS $size={26}>S</SogouS></ImeLogo>
    <ImeItem>中</ImeItem>
    <ImeItem><Moon size={15} fill="currentColor" strokeWidth={0} /></ImeItem>
    <ImeItem>°,</ImeItem>
    <ImeItem><Smile size={17} strokeWidth={1.8} /></ImeItem>
    <ImeItem><Mic size={16} strokeWidth={2.2} /></ImeItem>
    <ImeItem><Keyboard size={17} strokeWidth={2} /></ImeItem>
    <ImeItem $color="#aebccb"><UserRound size={15} fill="currentColor" strokeWidth={0} /></ImeItem>
    <ImeItem><Shirt size={16} fill="currentColor" strokeWidth={1} /></ImeItem>
    <ImeItem><Wrench size={15} fill="currentColor" strokeWidth={1} /></ImeItem>
  </ImeBar>
);

export default function App() {
  return (
    <Page>
      <GlobalStyle />
      <Title />
      <Tabs />
      <RibbonPanel />
      <Formula />
      <Grid />
      <SheetBar />
      <Status />
      <Tasks />
      <Ime />
    </Page>
  );
}
